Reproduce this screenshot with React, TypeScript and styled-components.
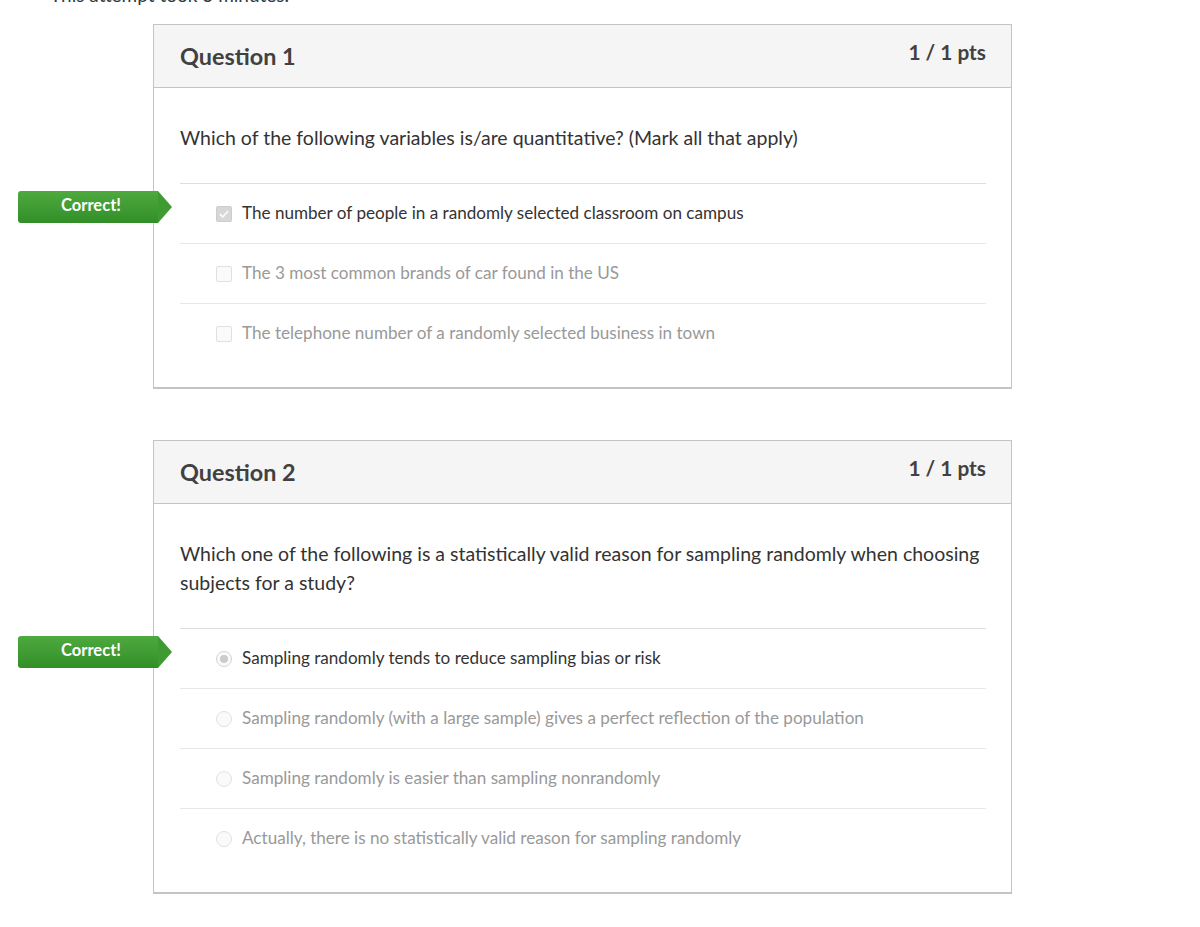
import React, { FC } from "react"
import styled, { createGlobalStyle } from "styled-components"

interface Answer {
  text: string
  selected?: boolean
}

interface QuestionData {
  title: string
  points: string
  prompt: string
  kind: "checkbox" | "radio"
  answers: Answer[]
}

const GlobalStyle = createGlobalStyle`
  html, body {
    margin: 0;
    padding: 0;
    background: rgb(255, 255, 255);
  }
  body {
    font-family: Lato, "Open Sans", Arial, sans-serif;
    color: rgb(45, 59, 69);
  }
`

const Page = styled.main`
  width: 1200px;
  overflow: hidden;
`

const AttemptNote = styled.div`
  margin: -15px 0 0 50px;
  height: 20px;
  font-size: 19px;
  line-height: 20px;
  color: rgb(45, 59, 69);
`

const Quiz = styled.div`
  display: flex;
  flex-direction: column;
  gap: 51px;
  margin: 19px 0 0 153px;
  width: 859px;
`

const Card = styled.section`
  border: 1px solid rgb(196, 196, 196);
  border-bottom-width: 2px;
  background: rgb(255, 255, 255);
`

const Header = styled.header`
  display: flex;
  justify-content: space-between;
  align-items: flex-start;
  height: 62px;
  padding: 0 25px 0 26px;
  background: rgb(245, 245, 245);
  border-bottom: 1px solid rgb(196, 196, 196);
`

const Title = styled.h2`
  margin: 16px 0 0;
  font-size: 23.4px;
  line-height: 30px;
  font-weight: 700;
  color: rgb(65, 65, 65);
`

const Points = styled.div`
  margin-top: 14px;
  font-size: 20.8px;
  line-height: 26px;
  font-weight: 700;
  color: rgb(65, 65, 65);
`

const Body = styled.div`
  padding: 35px 25px 24px 26px;
`

const Prompt = styled.p`
  margin: 0 0 31px;
  font-size: 19.5px;
  line-height: 29px;
  color: rgb(51, 51, 51);
`

const AnswerList = styled.ul`
  list-style: none;
  margin: 0;
  padding: 0;
  border-top: 1px solid rgb(222, 222, 222);
`

const Row = styled.li<{ $last?: boolean }>`
  position: relative;
  display: flex;
  align-items: center;
  gap: 10px;
  height: 59px;
  padding-left: 36px;
  border-bottom: ${p => (p.$last ? "none" : "1px solid rgb(232, 232, 232)")};
`

const AnswerText = styled.span<{ $selected?: boolean }>`
  margin-top: -2px;
  font-size: 17.1px;
  line-height: 20px;
  color: ${p => (p.$selected ? "rgb(51, 51, 51)" : "rgb(153, 153, 153)")};
`

const Box = styled.span<{ $checked?: boolean }>`
  display: inline-flex;
  align-items: center;
  justify-content: center;
  width: 14px;
  height: 14px;
  border: 1px solid ${p => (p.$checked ? "rgb(205, 205, 205)" : "rgb(224, 224, 224)")};
  border-radius: 2px;
  background: ${p => (p.$checked ? "rgb(215, 215, 215)" : "rgb(250, 250, 250)")};
`

const Radio = styled.span<{ $checked?: boolean }>`
  display: inline-flex;
  align-items: center;
  justify-content: center;
  width: 14px;
  height: 14px;
  border: 1px solid ${p => (p.$checked ? "rgb(212, 212, 212)" : "rgb(226, 226, 226)")};
  border-radius: 50%;
  background: rgb(250, 250, 250);

  &::after {
    content: "";
    display: ${p => (p.$checked ? "block" : "none")};
    width: 8px;
    height: 8px;
    border-radius: 50%;
    background: rgb(204, 204, 204);
  }
`

const Badge = styled.div`
  position: absolute;
  left: -162px;
  top: 7px;
  width: 140px;
  height: 32px;
  display: flex;
  align-items: center;
  justify-content: center;
  box-sizing: border-box;
  padding: 0 0 4px 6px;
  border-radius: 3px 0 0 3px;
  background: linear-gradient(rgb(78, 170, 62), rgb(50, 142, 40));
  color: rgb(255, 255, 255);
  font-size: 16.5px;
  font-weight: 700;

  &::after {
    content: "";
    position: absolute;
    right: -14px;
    top: 0;
    border-top: 16px solid transparent;
    border-bottom: 16px solid transparent;
    border-left: 14px solid rgb(62, 155, 50);
  }
`

const questions: QuestionData[] = [
  {
    title: "Question 1",
    points: "1 / 1 pts",
    prompt: "Which of the following variables is/are quantitative? (Mark all that apply)",
    kind: "checkbox",
    answers: [
      { text: "The number of people in a randomly selected classroom on campus", selected: true },
      { text: "The 3 most common brands of car found in the US" },
      { text: "The telephone number of a randomly selected business in town" }
    ]
  },
  {
    title: "Question 2",
    points: "1 / 1 pts",
    prompt:
      "Which one of the following is a statistically valid reason for sampling randomly when choosing subjects for a study?",
    kind: "radio",
    answers: [
      { text: "Sampling randomly tends to reduce sampling bias or risk", selected: true },
      { text: "Sampling randomly (with a large sample) gives a perfect reflection of the population" },
      { text: "Sampling randomly is easier than sampling nonrandomly" },
      { text: "Actually, there is no statistically valid reason for sampling randomly" }
    ]
  }
]

const Check: FC = () => (
  <svg width="12" height="12" viewBox="0 0 12 12">
    <path d="M2 6.2 L4.8 9 L10 3" fill="none" stroke="rgb(250, 250, 250)" strokeWidth="1.8" />
  </svg>
)

const Question: FC<{ q: QuestionData }> = ({ q }) => (
  <Card>
    <Header>
      <Title>{q.title}</Title>
      <Points>{q.points}</Points>
    </Header>
    <Body>
      <Prompt>{q.prompt}</Prompt>
      <AnswerList>
        {q.answers.map((a, i) => (
          <Row key={a.text} $last={i === q.answers.length - 1}>
            {a.selected && <Badge>Correct!</Badge>}
            {q.kind === "checkbox" ? (
              <Box $checked={a.selected}>{a.selected && <Check />}</Box>
            ) : (
              <Radio $checked={a.selected} />
            )}
            <AnswerText $selected={a.selected}>{a.text}</AnswerText>
          </Row>
        ))}
      </AnswerList>
    </Body>
  </Card>
)

const App: FC = () => (
  <Page>
    <GlobalStyle />
    <AttemptNote>This attempt took 3 minutes.</AttemptNote>
    <Quiz>
      {questions.map(q => (
        <Question key={q.title} q={q} />
      ))}
    </Quiz>
  </Page>
)

export default App
